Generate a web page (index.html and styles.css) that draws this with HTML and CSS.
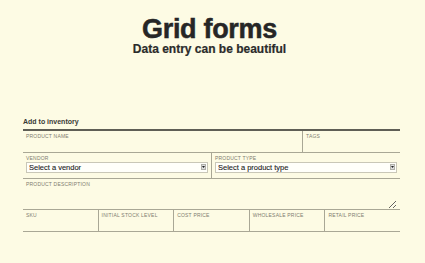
FILE: index.html
```html
<!DOCTYPE html>
<html lang="en">
<head>
  <meta charset="UTF-8">
  <meta name="viewport" content="width=device-width, initial-scale=1.0">
  <title>Grid forms</title>
  <link rel="stylesheet" href="styles.css">
</head>
<body>
  <header class="masthead">
    <h1 class="title">Grid forms</h1>
    <p class="tagline">Data entry can be beautiful</p>
  </header>

  <form class="grid-form" onsubmit="return false;">
    <h2 class="form-title">Add to inventory</h2>
    <div class="grid">
      <div class="row">
        <div class="field span-3">
          <label for="name">Product name</label>
          <input id="name" type="text">
        </div>
        <div class="field span-1">
          <label for="tags">Tags</label>
          <input id="tags" type="text">
        </div>
      </div>

      <div class="row">
        <div class="field span-2">
          <label for="vendor">Vendor</label>
          <div class="select-wrap">
            <select id="vendor">
              <option>Select a vendor</option>
            </select>
            <span class="select-arrow"><svg width="3" height="2" viewBox="0 0 3 2"><path d="M0 0h3L1.5 2z" fill="#222"/></svg></span>
          </div>
        </div>
        <div class="field span-2">
          <label for="type">Product type</label>
          <div class="select-wrap">
            <select id="type">
              <option>Select a product type</option>
            </select>
            <span class="select-arrow"><svg width="3" height="2" viewBox="0 0 3 2"><path d="M0 0h3L1.5 2z" fill="#222"/></svg></span>
          </div>
        </div>
      </div>

      <div class="row">
        <div class="field span-4">
          <label for="desc">Product description</label>
          <textarea id="desc"></textarea>
        </div>
      </div>

      <div class="row">
        <div class="field span-1">
          <label for="sku">SKU</label>
          <input id="sku" type="text">
        </div>
        <div class="field span-1">
          <label for="stock">Initial stock level</label>
          <input id="stock" type="text">
        </div>
        <div class="field span-1">
          <label for="cost">Cost price</label>
          <input id="cost" type="text">
        </div>
        <div class="field span-1">
          <label for="wholesale">Wholesale price</label>
          <input id="wholesale" type="text">
        </div>
        <div class="field span-1">
          <label for="retail">Retail price</label>
          <input id="retail" type="text">
        </div>
      </div>
    </div>
  </form>
</body>
</html>
```

FILE: styles.css
```css
body { margin: 0; padding: 0 25px 0 23px; background: #fdfbe4; font-family: "Liberation Sans", Arial, sans-serif; color: #262626; }

.masthead { padding-top: 18px; padding-right: 4px; text-align: center; }
.title { margin: 0; font-size: 27px; line-height: 23px; font-weight: bold; letter-spacing: -0.3px; color: #262626; -webkit-text-stroke: 0.5px #262626; }
.tagline { margin: 2px 0 0; font-size: 12px; line-height: 13px; font-weight: bold; color: #2b2b2b; -webkit-text-stroke: 0.2px #2b2b2b; }

.grid-form { margin-top: 61px; }
.form-title { margin: 0 0 3px; font-size: 7px; line-height: 9px; font-weight: bold; color: #3a3a36; }
.grid { border-top: 2px solid #5f5e55; }

.row { display: flex; border-bottom: 1px solid #a9a795; }
.field { box-sizing: border-box; padding: 2px 3px 0; border-left: 1px solid #a9a795; }
.field:first-child { border-left: none; }
.span-1 { flex: 1 1 0; }
.span-2 { flex: 2 1 0; }
.span-3 { flex: 3 1 0; }
.span-4 { flex: 4 1 0; }

label { display: block; font-size: 5px; line-height: 7px; letter-spacing: 0.2px; text-transform: uppercase; color: #7f7d70; }

input, textarea { display: block; width: 100%; margin: 0; padding: 0; border: none; background: transparent; box-sizing: border-box; font: 8px "Liberation Sans", Arial, sans-serif; outline: none; }
input { height: 12px; }
textarea { height: 21px; resize: vertical; }

.select-wrap { position: relative; height: 11px; margin-bottom: 5px; }
select { -webkit-appearance: none; appearance: none; display: block; width: 100%; height: 11px; margin: 0; padding: 0 2px; box-sizing: border-box; border: 1px solid #c9c7b7; border-radius: 0; background: #fffffa; font: 7.5px/9px "Liberation Sans", Arial, sans-serif; color: #1a1a1a; -webkit-text-stroke: 0.1px #1a1a1a; }
.select-arrow { position: absolute; top: 2px; right: 2px; width: 5px; height: 6px; box-sizing: border-box; border: 1px solid #b0b0a8; background: #dedede; display: flex; align-items: center; justify-content: center; pointer-events: none; }
```
